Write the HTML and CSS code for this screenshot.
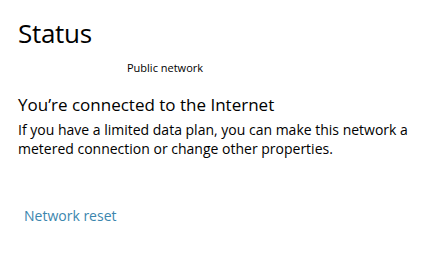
FILE: index.html
```html
<!DOCTYPE html>
<html>
<head>
<meta charset="utf-8">
<link rel="stylesheet" href="styles.css">
</head>
<body>
<main class="page">
  <h1 class="title">Status</h1>
  <div class="network-name">Public network</div>
  <section class="connection">
    <h2 class="heading">You’re connected to the Internet</h2>
    <p class="desc">If you have a limited data plan, you can make this network a metered connection or change other properties.</p>
  </section>
  <a class="link" href="#">Network reset</a>
</main>
</body>
</html>
```
FILE: styles.css
```css
html, body {
  margin: 0;
  padding: 0;
  background: #ffffff;
}
.page {
  font-family: "Open Sans", "Noto Sans", sans-serif;
  color: #000;
  padding: 16px 0 0 18px;
  display: flex;
  flex-direction: column;
  align-items: flex-start;
}
.title {
  margin: 0;
  font-weight: 400;
  font-size: 26px;
  line-height: 34px;
  letter-spacing: -0.3px;
}
.network-name {
  margin: 10px 0 0 109px;
  font-size: 11px;
  line-height: 15px;
}
.connection {
  margin-top: 18px;
}
.heading {
  margin: 0;
  font-weight: 400;
  font-size: 17px;
  line-height: 24px;
}
.desc {
  margin: 3px 0 0;
  font-size: 14px;
  line-height: 19px;
  width: 413px;
}
.link {
  margin: 48px 0 0 6px;
  font-size: 14px;
  line-height: 19px;
  color: #3b86ae;
  text-decoration: none;
}
```
